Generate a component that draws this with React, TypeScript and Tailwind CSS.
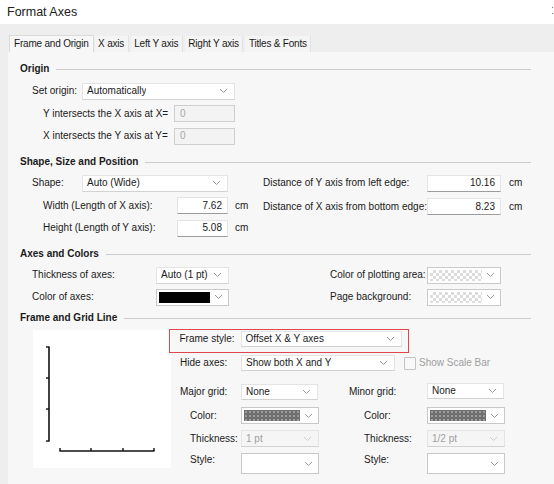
import React from 'react'

const font = { fontFamily: '"Liberation Sans", Arial, sans-serif' }

function Chevron({ dim = false }: { dim?: boolean }) {
  return (
    <svg width="9" height="6" viewBox="0 0 9 6" className="shrink-0">
      <path d="M1 1 L4.5 4.5 L8 1" fill="none" stroke={dim ? '#cfcfcf' : '#9a9a9a'} strokeWidth="1" />
    </svg>
  )
}

function Select({ w, text, disabled = false, h = 'h-[17px]' }: { w: string; text?: string; disabled?: boolean; h?: string }) {
  return (
    <div
      className={`${w} ${h} flex items-center justify-between pl-[4px] pr-[6px] border border-[#e4e4e4] border-b-[#d2d2d2] ${
        disabled ? 'bg-[#f5f5f5] text-[#a0a0a0]' : 'bg-white text-[#1a1a1a]'
      }`}
    >
      <span className="truncate">{text}</span>
      <Chevron dim={disabled} />
    </div>
  )
}

function NumInput({ w, value }: { w: string; value: string }) {
  return (
    <div className={`${w} h-[17px] flex items-center justify-end pr-[5px] bg-white border border-[#e4e4e4] border-b-[#9c9c9c] text-[#1a1a1a]`}>
      {value}
    </div>
  )
}

function DisabledInput({ value }: { value: string }) {
  return (
    <div className="w-[61px] h-[17px] flex items-center pl-[5px] bg-[#f3f3f3] border border-[#cfcfcf] text-[#a8a8a8]">
      {value}
    </div>
  )
}

function Swatch({ w, kind, h = 'h-[17px]' }: { w: string; kind: 'black' | 'checker' | 'gray' | 'blank'; h?: string }) {
  const fill =
    kind === 'black'
      ? 'bg-black'
      : kind === 'checker'
        ? 'bg-white bg-[image:conic-gradient(#dcdcdc_25%,#ffffff_0_50%,#dcdcdc_0_75%,#ffffff_0)] bg-[length:6px_6px]'
        : kind === 'gray'
          ? 'bg-[#6f6f6f] bg-[image:radial-gradient(#9c9c9c_0.8px,transparent_0.9px)] bg-[length:4px_4px]'
          : 'bg-white'
  return (
    <div className={`${w} ${h} flex items-stretch bg-white border border-[#c9c9c9] p-[2px]`}>
      <div className={`flex-1 ${fill}`} />
      <div className="w-[16px] flex items-center justify-center">
        <Chevron />
      </div>
    </div>
  )
}

function SectionHeader({ title }: { title: string }) {
  return (
    <div className="h-[20px] flex items-center pl-[12px] pr-[23px]">
      <span className="font-bold text-[#1a1a1a]">{title}</span>
      <div className="flex-1 h-px bg-[#cccccc] ml-[7px]" />
    </div>
  )
}

function Preview() {
  const yTicks = [17, 48, 79, 111]
  const xTicks = [27, 58, 90, 121]
  return (
    <div className="w-[138px] h-[138px] bg-white ml-[25px] mt-[2px] shrink-0">
      <svg width="138" height="138" viewBox="0 0 138 138">
        <line x1="16" y1="16.5" x2="16" y2="111.5" stroke="#111" strokeWidth="1.6" />
        {yTicks.map((y) => (
          <line key={y} x1="13" y1={y} x2="16" y2={y} stroke="#111" strokeWidth="1.4" />
        ))}
        <line x1="26.5" y1="121" x2="121.5" y2="121" stroke="#111" strokeWidth="1.6" />
        {xTicks.map((x) => (
          <line key={x} x1={x} y1="118" x2={x} y2="121" stroke="#111" strokeWidth="1.4" />
        ))}
      </svg>
    </div>
  )
}

const tabs = ['Frame and Origin', 'X axis', 'Left Y axis', 'Right Y axis', 'Titles & Fonts']

export default function App() {
  return (
    <div style={font} className="w-[554px] h-[484px] overflow-hidden bg-[#eeeeee] text-[10px] text-[#1a1a1a] leading-none whitespace-nowrap">
      {/* title bar */}
      <div className="h-[24px] bg-white flex items-center justify-between pl-[7px] pr-[1px]">
        <span className="text-[12.5px] text-[#202020]">Format Axes</span>
        <div className="flex flex-col gap-[5px] pb-[3px]">
          <span className="w-[1px] h-[1px] bg-[#777]" />
          <span className="w-[1px] h-[1px] bg-[#777]" />
        </div>
      </div>

      {/* tabs */}
      <div className="flex items-end pl-[9px] h-[28px] tracking-[-0.2px]">
        {tabs.map((t, i) =>
          i === 0 ? (
            <div key={t} className="h-[17px] px-[4px] flex items-center bg-[#f7f7f7] border border-b-0 border-[#dadada] text-[#1a1a1a]">
              {t}
            </div>
          ) : (
            <div key={t} className="h-[16px] px-[3.5px] mx-[1px] flex items-center bg-[#f4f4f4] border-r border-[#e2e2e2] text-[#1a1a1a]">
              {t}
            </div>
          ),
        )}
      </div>

      {/* panel */}
      <div className="ml-[8px] bg-[#f7f7f7] h-[432px] pt-[7px]">
        <SectionHeader title="Origin" />
        <div className="h-[22px] mt-[1px] flex items-center pl-[24px]">
          <span className="w-[50px]">Set origin:</span>
          <Select w="w-[153px]" text="Automatically" />
        </div>
        <div className="h-[23px] flex items-center pl-[35px]">
          <span className="w-[131px]">Y intersects the X axis at X=</span>
          <DisabledInput value="0" />
        </div>
        <div className="h-[22px] flex items-center pl-[35px]">
          <span className="w-[131px]">X intersects the Y axis at Y=</span>
          <DisabledInput value="0" />
        </div>

        <div className="mt-[5px]">
          <SectionHeader title="Shape, Size and Position" />
        </div>
        <div className="flex">
          <div className="w-[255px]">
            <div className="h-[22px] flex items-center pl-[24px]">
              <span className="w-[50px]">Shape:</span>
              <Select w="w-[146px]" text="Auto (Wide)" />
            </div>
            <div className="h-[23px] flex items-center pl-[35px]">
              <span className="w-[134px]">Width (Length of X axis):</span>
              <NumInput w="w-[51px]" value="7.62" />
              <span className="ml-[7px]">cm</span>
            </div>
            <div className="h-[22px] flex items-center pl-[35px]">
              <span className="w-[134px]">Height (Length of Y axis):</span>
              <NumInput w="w-[51px]" value="5.08" />
              <span className="ml-[7px]">cm</span>
            </div>
          </div>
          <div>
            <div className="h-[22px] flex items-center">
              <span className="w-[164px]">Distance of Y axis from left edge:</span>
              <NumInput w="w-[74px]" value="10.16" />
              <span className="ml-[8px]">cm</span>
            </div>
            <div className="h-[25px] flex items-center">
              <span className="w-[164px]">Distance of X axis from bottom edge:</span>
              <NumInput w="w-[74px]" value="8.23" />
              <span className="ml-[8px]">cm</span>
            </div>
          </div>
        </div>

        <div className="mt-[5px]">
          <SectionHeader title="Axes and Colors" />
        </div>
        <div className="flex">
          <div className="w-[255px]">
            <div className="h-[22px] flex items-center pl-[24px]">
              <span className="w-[124px]">Thickness of axes:</span>
              <Select w="w-[73px]" text="Auto (1 pt)" />
            </div>
            <div className="h-[22px] flex items-center pl-[24px]">
              <span className="w-[124px]">Color of axes:</span>
              <Swatch w="w-[73px]" kind="black" />
            </div>
          </div>
          <div className="pl-[67px]">
            <div className="h-[22px] flex items-center">
              <span className="w-[97px]">Color of plotting area:</span>
              <Swatch w="w-[74px]" kind="checker" />
            </div>
            <div className="h-[22px] flex items-center">
              <span className="w-[97px]">Page background:</span>
              <Swatch w="w-[74px]" kind="checker" />
            </div>
          </div>
        </div>

        <SectionHeader title="Frame and Grid Line" />
        <div className="flex">
          <Preview />
          <div className="-ml-[2px] pt-[1px]">
            <div className="w-[240px] h-[24px] border-[1.5px] border-[#e0464c] flex items-start pt-[1px] pl-[9.5px]">
              <span className="w-[61px] h-[16px] flex items-center">Frame style:</span>
              <Select w="w-[161px]" h="h-[16px]" text="Offset X & Y axes" />
            </div>
            <div className="h-[18px] mt-[1px] flex items-center pl-[11px]">
              <span className="w-[61px]">Hide axes:</span>
              <Select w="w-[154px]" h="h-[16px]" text="Show both X and Y" />
              <div className="ml-[9px] w-[12px] h-[13px] border border-[#c4c4c4] bg-[#f9f9f9] rounded-[1px]" />
              <span className="ml-[3px] text-[#a0a0a0]">Show Scale Bar</span>
            </div>
            <div className="h-[16px] mt-[12px] flex items-center pl-[11px]">
              <span className="w-[61px]">Major grid:</span>
              <Select w="w-[77px]" h="h-[16px]" text="None" />
              <span className="ml-[31px] w-[78px]">Minor grid:</span>
              <div className="-mt-[3px]">
                <Select w="w-[77px]" h="h-[16px]" text="None" />
              </div>
            </div>
            <div className="h-[17px] mt-[7px] flex items-center pl-[21px]">
              <span className="w-[51px]">Color:</span>
              <Swatch w="w-[78px]" kind="gray" />
              <span className="ml-[45px] w-[63px]">Color:</span>
              <Swatch w="w-[78px]" kind="gray" />
            </div>
            <div className="h-[17px] mt-[6px] flex items-center pl-[21px]">
              <span className="w-[51px]">Thickness:</span>
              <Select w="w-[78px]" text="1 pt" disabled />
              <span className="ml-[45px] w-[63px]">Thickness:</span>
              <Select w="w-[78px]" text="1/2 pt" disabled />
            </div>
            <div className="h-[21px] mt-[6px] flex items-start pl-[21px]">
              <span className="w-[51px] mt-[2px]">Style:</span>
              <Swatch w="w-[78px]" h="h-[21px]" kind="blank" />
              <span className="ml-[45px] w-[63px] mt-[2px]">Style:</span>
              <Swatch w="w-[78px]" h="h-[21px]" kind="blank" />
            </div>
          </div>
        </div>
      </div>
    </div>
  )
}
